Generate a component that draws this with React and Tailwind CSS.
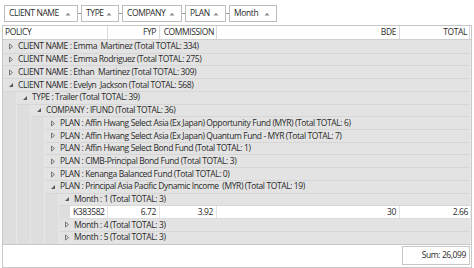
const rows = [
  { lvl: 0, open: false, text: "CLIENT NAME : Emma  Martinez (Total TOTAL: 334)" },
  { lvl: 0, open: false, text: "CLIENT NAME : Emma Rodriguez (Total TOTAL: 275)" },
  { lvl: 0, open: false, text: "CLIENT NAME : Ethan  Martinez (Total TOTAL: 309)" },
  { lvl: 0, open: true, text: "CLIENT NAME : Evelyn  Jackson (Total TOTAL: 568)" },
  { lvl: 1, open: true, text: "TYPE : Trailer (Total TOTAL: 39)" },
  { lvl: 2, open: true, text: "COMPANY : IFUND (Total TOTAL: 36)" },
  { lvl: 3, open: false, text: "PLAN : Affin Hwang Select Asia (Ex Japan) Opportunity Fund (MYR) (Total TOTAL: 6)" },
  { lvl: 3, open: false, text: "PLAN : Affin Hwang Select Asia (Ex Japan) Quantum Fund - MYR (Total TOTAL: 7)" },
  { lvl: 3, open: false, text: "PLAN : Affin Hwang Select Bond Fund (Total TOTAL: 1)" },
  { lvl: 3, open: false, text: "PLAN : CIMB-Principal Bond Fund (Total TOTAL: 3)" },
  { lvl: 3, open: false, text: "PLAN : Kenanga Balanced Fund (Total TOTAL: 0)" },
  { lvl: 3, open: true, text: "PLAN : Principal Asia Pacific Dynamic Income  (MYR) (Total TOTAL: 19)" },
  { lvl: 4, open: true, text: "Month : 1 (Total TOTAL: 3)" },
  { data: true },
  { lvl: 4, open: false, text: "Month : 4 (Total TOTAL: 3)" },
  { lvl: 4, open: false, text: "Month : 5 (Total TOTAL: 3)" },
];

function Arrow({ open }) {
  return open ? (
    <svg width="6" height="6" viewBox="0 0 6 6" className="block">
      <polygon points="5,1 5,5 1,5" fill="#5a5a5a" />
    </svg>
  ) : (
    <svg width="6" height="7" viewBox="0 0 6 7" className="block">
      <polygon points="1.5,1 4.5,3.5 1.5,6" fill="none" stroke="#6a6a6a" strokeWidth="0.9" />
    </svg>
  );
}

function SortUp() {
  return (
    <svg width="6" height="4" viewBox="0 0 6 4" className="block">
      <polygon points="0.5,3.5 3,0.8 5.5,3.5" fill="#8a8a8a" />
    </svg>
  );
}

function Chip({ label, w, first }) {
  return (
    <div className="flex items-center">
      {!first && <div className="w-[3px] h-px bg-[#9a9a9a]" />}
      <div className={`h-[17px] border border-[#bdbdbd] bg-white flex items-center justify-between pl-[4px] pr-[6px] ${w}`}>
        <span>{label}</span>
        <SortUp />
      </div>
    </div>
  );
}

function Indents({ n }) {
  return Array.from({ length: n }).map((_, i) => (
    <div key={i} className="w-[14px] shrink-0 h-full bg-[#dedede] border-r border-[#e6e6e6]" />
  ));
}

function GroupRow({ lvl, open, text }) {
  return (
    <div className="h-[12.73px] flex">
      <Indents n={lvl} />
      <div className="flex-1 flex items-center bg-[#e3e3e3] border-b border-[#d6d6d6] min-w-0">
        <div className="w-[15px] shrink-0 flex justify-center pl-[1px]">
          <Arrow open={open} />
        </div>
        <span className="whitespace-pre">{text}</span>
      </div>
    </div>
  );
}

function DataRow() {
  return (
    <div className="h-[12.73px] flex">
      <Indents n={4} />
      <div className="w-[11px] shrink-0 h-full bg-[#dedede]" />
      <div className="flex-1 flex bg-white border-b border-[#dcdcdc]">
        <div className="w-[38px] shrink-0 border-r border-[#e2e2e2] flex items-center pl-[3px]">K383582</div>
        <div className="w-[52px] shrink-0 border-r border-[#e2e2e2] flex items-center justify-end pr-[3px]">6.72</div>
        <div className="w-[57px] shrink-0 border-r border-[#e2e2e2] flex items-center justify-end pr-[3px]">3.92</div>
        <div className="w-[183px] shrink-0 border-r border-[#e2e2e2] flex items-center justify-end pr-[3px]">30</div>
        <div className="flex-1 flex items-center justify-end pr-[2px]">2.66</div>
      </div>
    </div>
  );
}

export default function App() {
  return (
    <div className="w-[474px] h-[268px] bg-white overflow-hidden font-['Open_Sans',sans-serif] text-[8.5px] tracking-[-0.4px] text-[#2a2a2a] pt-[5px]">
      <div className="flex items-center pl-[4px] h-[17px]">
        <Chip first label="CLIENT NAME" w="w-[74px]" />
        <Chip label="TYPE" w="w-[38px]" />
        <Chip label="COMPANY" w="w-[60px]" />
        <Chip label="PLAN" w="w-[41px]" />
        <Chip label="Month" w="w-[48px]" />
      </div>
      <div className="mt-[3px] ml-[2px] w-[470px] h-[243px] border border-[#c8c8c8] flex flex-col">
        <div className="h-[14px] shrink-0 flex bg-white border-b border-[#cfcfcf]">
          <div className="w-[105px] border-r border-[#d8d8d8] flex items-center pl-[2px]">POLICY</div>
          <div className="w-[52px] border-r border-[#d8d8d8] flex items-center justify-end pr-[3px]">FYP</div>
          <div className="w-[57px] border-r border-[#d8d8d8] flex items-center justify-end pr-[2px]">COMMISSION</div>
          <div className="w-[183px] border-r border-[#d8d8d8] flex items-center justify-end pr-[3px]">BDE</div>
          <div className="w-[70px] border-r border-[#d8d8d8] flex items-center justify-end pr-[2px]">TOTAL</div>
          <div className="flex-1" />
        </div>
        <div className="h-[204px] shrink-0 overflow-hidden flex">
          <div className="w-[467px] shrink-0 bg-[#e3e3e3] pt-[1px]">
            {rows.map((r, i) => (r.data ? <DataRow key={i} /> : <GroupRow key={i} {...r} />))}
          </div>
          <div className="flex-1 bg-[#ececec]" />
        </div>
        <div className="flex-1 bg-white border-t border-[#c8c8c8] flex items-start pt-[1px] justify-end pr-[1px]">
          <div className="w-[68px] h-[19px] border border-[#c6c6c6] flex items-center justify-end pr-[3px]">Sum: 26,099</div>
        </div>
      </div>
    </div>
  );
}
